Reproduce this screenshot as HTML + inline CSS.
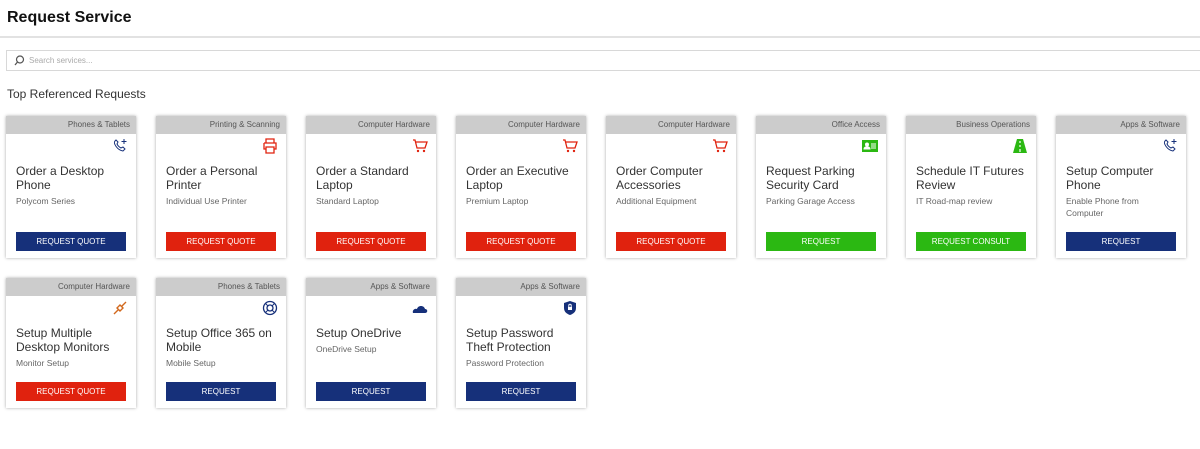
<!DOCTYPE html><html><head><style>
body{margin:0;width:1200px;height:449px;background:#fff;font-family:"Liberation Sans",sans-serif;position:relative;overflow:hidden;color:#333}
.h{position:absolute;left:7px;top:9px;font-size:16px;font-weight:bold;color:#111}
.line{position:absolute;left:0;right:0;top:36px;height:2px;background:#e2e2e2}
.s{position:absolute;left:6px;top:50px;width:1200px;height:21px;border:1px solid #d8d8d8;box-sizing:border-box}
.s span{position:absolute;left:22px;top:5px;font-size:8px;color:#aaa}
.t{position:absolute;left:7px;top:87px;font-size:12px;color:#333}
.c{position:absolute;width:130px;height:142px;background:#fff;box-shadow:0 0 3px rgba(0,0,0,.35)}
.c.r2{height:130px}
.c .cat{height:18px;background:#ccc;font-size:8px;color:#555;text-align:right;padding-right:6px;line-height:18px}
.c .ti{position:absolute;left:10px;top:48px;font-size:12px;line-height:14px;color:#333;width:115px}
.c .su{position:absolute;left:10px;top:79px;font-size:8.5px;color:#666;width:100px;line-height:12px}
.c .b{position:absolute;left:10px;bottom:7px;width:110px;height:19px;color:#fff;font-size:8px;text-align:center;line-height:19px}
.c .ic{position:absolute;right:8px;top:22px;width:16px;height:16px}
.blue{background:#16307a}.red{background:#e0220e}.green{background:#2bb812}
</style></head><body>
<div class="h">Request Service</div><div class="line"></div>
<div class="s"><svg style="position:absolute;left:7px;top:4px" width="11" height="11" viewBox="0 0 11 11"><circle cx="6" cy="4.5" r="3.5" fill="none" stroke="#555" stroke-width="1.2"/><path d="M3.5 7L1 10" stroke="#555" stroke-width="1.3"/></svg><span>Search services...</span></div>
<div class="t">Top Referenced Requests</div>

<div class="c" style="left:6px;top:116px"><div class="cat">Phones &amp; Tablets</div><svg class="ic" viewBox="0 0 16 16"><path d="M3 3c-2 2 2 9 8 10l2-2-2-2-2 1C7 9 6 8 5 6l1-2-2-2z" fill="none" stroke="#16307a" stroke-width="1"/><path d="M12 1v5M9.5 3.5h5" stroke="#16307a"/></svg><div class="ti">Order a Desktop Phone</div><div class="su">Polycom Series</div><div class="b blue">REQUEST QUOTE</div></div>
<div class="c" style="left:156px;top:116px"><div class="cat">Printing &amp; Scanning</div><svg class="ic" viewBox="0 0 16 16"><path d="M4 5V1h8v4M2 5h12v6h-2M4 11H2V5M4 9h8v6H4z" fill="none" stroke="#e0220e" stroke-width="1.3"/></svg><div class="ti">Order a Personal Printer</div><div class="su">Individual Use Printer</div><div class="b red">REQUEST QUOTE</div></div>
<div class="c" style="left:306px;top:116px"><div class="cat">Computer Hardware</div><svg class="ic" viewBox="0 0 16 16"><path d="M1 2h2l2 8h8l2-6H4" fill="none" stroke="#e0220e" stroke-width="1.3"/><circle cx="6" cy="13" r="1.2" fill="#e0220e"/><circle cx="12" cy="13" r="1.2" fill="#e0220e"/></svg><div class="ti">Order a Standard Laptop</div><div class="su">Standard Laptop</div><div class="b red">REQUEST QUOTE</div></div>
<div class="c" style="left:456px;top:116px"><div class="cat">Computer Hardware</div><svg class="ic" viewBox="0 0 16 16"><path d="M1 2h2l2 8h8l2-6H4" fill="none" stroke="#e0220e" stroke-width="1.3"/><circle cx="6" cy="13" r="1.2" fill="#e0220e"/><circle cx="12" cy="13" r="1.2" fill="#e0220e"/></svg><div class="ti">Order an Executive Laptop</div><div class="su">Premium Laptop</div><div class="b red">REQUEST QUOTE</div></div>
<div class="c" style="left:606px;top:116px"><div class="cat">Computer Hardware</div><svg class="ic" viewBox="0 0 16 16"><path d="M1 2h2l2 8h8l2-6H4" fill="none" stroke="#e0220e" stroke-width="1.3"/><circle cx="6" cy="13" r="1.2" fill="#e0220e"/><circle cx="12" cy="13" r="1.2" fill="#e0220e"/></svg><div class="ti">Order Computer Accessories</div><div class="su">Additional Equipment</div><div class="b red">REQUEST QUOTE</div></div>
<div class="c" style="left:756px;top:116px"><div class="cat">Office Access</div><svg class="ic" viewBox="0 0 16 16"><rect x="0" y="2" width="16" height="12" fill="#2bb812"/><circle cx="5" cy="6.5" r="2" fill="#fff"/><path d="M2 11c0-3 6-3 6 0zM9 6h5M9 8h5M9 10h5" fill="#fff" stroke="#fff" stroke-width="1"/></svg><div class="ti">Request Parking Security Card</div><div class="su">Parking Garage Access</div><div class="b green">REQUEST</div></div>
<div class="c" style="left:906px;top:116px"><div class="cat">Business Operations</div><svg class="ic" viewBox="0 0 16 16"><path d="M5 1h6l4 14H1z" fill="#2bb812"/><path d="M8 3v2M8 7v2M8 11v3" stroke="#fff" stroke-width="1.2"/></svg><div class="ti">Schedule IT Futures Review</div><div class="su">IT Road-map review</div><div class="b green">REQUEST CONSULT</div></div>
<div class="c" style="left:1056px;top:116px"><div class="cat">Apps &amp; Software</div><svg class="ic" viewBox="0 0 16 16"><path d="M3 3c-2 2 2 9 8 10l2-2-2-2-2 1C7 9 6 8 5 6l1-2-2-2z" fill="none" stroke="#16307a" stroke-width="1"/><path d="M12 1v5M9.5 3.5h5" stroke="#16307a"/></svg><div class="ti">Setup Computer Phone</div><div class="su">Enable Phone from Computer</div><div class="b blue">REQUEST</div></div>

<div class="c r2" style="left:6px;top:278px"><div class="cat">Computer Hardware</div><svg class="ic" viewBox="0 0 16 16"><path d="M2 14l4-4M10 6l4-4M5 8l3 3 3-3-3-3z" fill="none" stroke="#d2691e" stroke-width="1.4"/></svg><div class="ti">Setup Multiple Desktop Monitors</div><div class="su">Monitor Setup</div><div class="b red">REQUEST QUOTE</div></div>
<div class="c r2" style="left:156px;top:278px"><div class="cat">Phones &amp; Tablets</div><svg class="ic" viewBox="0 0 16 16"><circle cx="8" cy="8" r="6.5" fill="none" stroke="#16307a" stroke-width="1.3"/><circle cx="8" cy="8" r="3" fill="none" stroke="#16307a" stroke-width="1.3"/><path d="M3.5 3.5l2.4 2.4M12.5 3.5l-2.4 2.4M3.5 12.5l2.4-2.4M12.5 12.5l-2.4-2.4" stroke="#16307a"/></svg><div class="ti">Setup Office 365 on Mobile</div><div class="su">Mobile Setup</div><div class="b blue">REQUEST</div></div>
<div class="c r2" style="left:306px;top:278px"><div class="cat">Apps &amp; Software</div><svg class="ic" viewBox="0 0 16 16"><path d="M1 13c-1-3 2-5 4-4 1-4 7-4 8 0 3 0 3 4 0 4z" fill="#16307a"/></svg><div class="ti">Setup OneDrive</div><div class="su" style="top:65px">OneDrive Setup</div><div class="b blue">REQUEST</div></div>
<div class="c r2" style="left:456px;top:278px"><div class="cat">Apps &amp; Software</div><svg class="ic" viewBox="0 0 16 16"><path d="M8 1l6 2v5c0 4-3 6-6 7-3-1-6-3-6-7V3z" fill="#16307a"/><rect x="6" y="7" width="4" height="3" fill="#fff"/><path d="M6.8 7V5.5a1.2 1.2 0 0 1 2.4 0V7" fill="none" stroke="#fff"/></svg><div class="ti">Setup Password Theft Protection</div><div class="su">Password Protection</div><div class="b blue">REQUEST</div></div>
</body></html>
